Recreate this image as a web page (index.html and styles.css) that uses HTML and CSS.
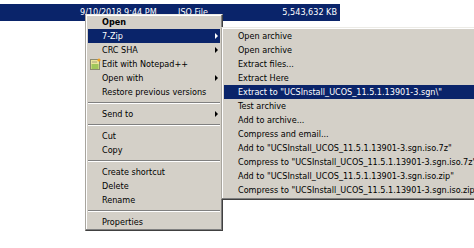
FILE: index.html
```html
<!DOCTYPE html>
<html lang="en">
<head>
    <meta charset="UTF-8">
    <meta name="viewport" content="width=device-width, initial-scale=1.0">
    <title>7-Zip context menu</title>
    <link rel="stylesheet" href="styles.css">
</head>
<body>

  <div class="file-row">
    <span class="cell cell--name"></span>
    <span class="cell cell--date">9/10/2018 9:44 PM</span>
    <span class="cell cell--type">ISO File</span>
    <span class="cell cell--size">5,543,632 KB</span>
  </div>

  <ul class="menu menu--main">
    <li class="menu__item menu__item--bold"><span class="menu__icon"></span>Open</li>
    <li class="menu__item menu__item--active menu__item--sub"><span class="menu__icon"></span>7-Zip</li>
    <li class="menu__item menu__item--sub"><span class="menu__icon"></span>CRC SHA</li>
    <li class="menu__item">
      <span class="menu__icon">
        <svg width="11" height="12" viewBox="0 0 11 12">
          <rect x="0.5" y="1.5" width="9" height="10" fill="#e9e59a" stroke="#8a8a70"/>
          <rect x="1.5" y="6" width="7" height="5" fill="#9fc65a"/>
          <line x1="2" y1="4" x2="7" y2="4" stroke="#a7a27a"/>
          <circle cx="9" cy="2" r="1.6" fill="#f0a020"/>
        </svg>
      </span>Edit with Notepad++</li>
    <li class="menu__item menu__item--sub"><span class="menu__icon"></span>Open with</li>
    <li class="menu__item"><span class="menu__icon"></span>Restore previous versions</li>
    <li class="menu__sep"></li>
    <li class="menu__item menu__item--sub"><span class="menu__icon"></span>Send to</li>
    <li class="menu__sep"></li>
    <li class="menu__item"><span class="menu__icon"></span>Cut</li>
    <li class="menu__item"><span class="menu__icon"></span>Copy</li>
    <li class="menu__sep"></li>
    <li class="menu__item"><span class="menu__icon"></span>Create shortcut</li>
    <li class="menu__item"><span class="menu__icon"></span>Delete</li>
    <li class="menu__item"><span class="menu__icon"></span>Rename</li>
    <li class="menu__sep"></li>
    <li class="menu__item"><span class="menu__icon"></span>Properties</li>
  </ul>

  <ul class="menu menu--sub">
    <li class="menu__item"><span class="menu__icon"></span>Open archive</li>
    <li class="menu__item"><span class="menu__icon"></span>Open archive</li>
    <li class="menu__item"><span class="menu__icon"></span>Extract files...</li>
    <li class="menu__item"><span class="menu__icon"></span>Extract Here</li>
    <li class="menu__item menu__item--active"><span class="menu__icon"></span>Extract to "UCSInstall_UCOS_11.5.1.13901-3.sgn\"</li>
    <li class="menu__item"><span class="menu__icon"></span>Test archive</li>
    <li class="menu__item"><span class="menu__icon"></span>Add to archive...</li>
    <li class="menu__item"><span class="menu__icon"></span>Compress and email...</li>
    <li class="menu__item"><span class="menu__icon"></span>Add to "UCSInstall_UCOS_11.5.1.13901-3.sgn.iso.7z"</li>
    <li class="menu__item"><span class="menu__icon"></span>Compress to "UCSInstall_UCOS_11.5.1.13901-3.sgn.iso.7z"</li>
    <li class="menu__item"><span class="menu__icon"></span>Add to "UCSInstall_UCOS_11.5.1.13901-3.sgn.iso.zip"</li>
    <li class="menu__item"><span class="menu__icon"></span>Compress to "UCSInstall_UCOS_11.5.1.13901-3.sgn.iso.zip"</li>
  </ul>

</body>
</html>
```

FILE: styles.css
```css
*,
*::before,
*::after {
  box-sizing: border-box;
}

:root {
  --menu-bg: #d4d0c8;
  --select: #0a246a;
}

body {
  margin: 0;
  height: 100vh;
  overflow: hidden;
  position: relative;
  background: #fff;
  font-family: "DejaVu Sans Condensed", "DejaVu Sans", sans-serif;
  font-size: 9px;
  color: #000;
}

/* the selected row in explorer, behind the menus */
.file-row {
  display: flex;
  width: 340px;
  height: 17px;
  margin-top: 4px;
  background: var(--select);
  color: #fff;
  line-height: 17px;
  white-space: nowrap;
}

.cell--name { width: 80px; }
.cell--date { width: 98px; }
.cell--type { width: 60px; }

.cell--size {
  flex: 1;
  text-align: right;
  padding-right: 3px;
}

/* context menus */
.menu {
  position: absolute;
  list-style: none;
  margin: 0;
  padding: 0 1px 1px;
  background: var(--menu-bg);
  border: 1px solid;
  border-color: #ecebe6 #404040 #404040 #a8a59e;
  box-shadow: inset -1px -1px 0 #808080, inset 1px 1px 0 #fff;
  white-space: nowrap;
}

.menu--main {
  left: 85px;
  top: 14px;
  width: 138px;
}

.menu--sub {
  left: 221px;
  top: 27px;
  width: 262px;
  padding-top: 1px;
  padding-bottom: 2px;
}

.menu__item {
  display: flex;
  align-items: center;
  height: 14px;
  margin: 0 1px;
  padding-left: 2px;
}

.menu__icon {
  display: flex;
  align-items: center;
  flex-shrink: 0;
  width: 12px;
  height: 14px;
}

.menu__item--bold {
  font-weight: bold;
}

.menu__item--active {
  background: var(--select);
  color: #fff;
}

.menu__item--sub::after {
  content: "";
  margin-left: auto;
  margin-right: 2px;
  border-left: 3px solid currentColor;
  border-top: 3px solid transparent;
  border-bottom: 3px solid transparent;
}

.menu__sep {
  height: 2px;
  margin: 3px 1px;
  border-top: 1px solid #808080;
  border-bottom: 1px solid #fff;
}
```
